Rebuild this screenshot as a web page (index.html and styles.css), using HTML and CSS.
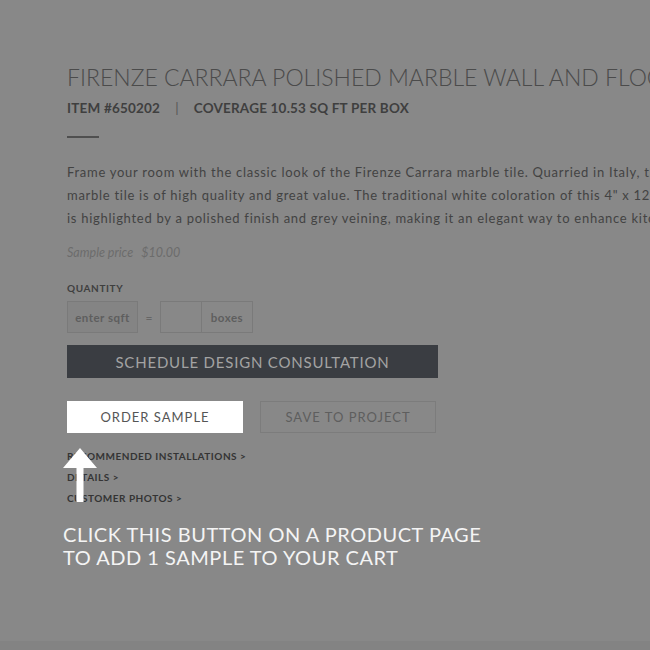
FILE: index.html
```html
<!DOCTYPE html>
<html>
<head>
<meta charset="utf-8">
<link rel="stylesheet" href="styles.css">
</head>
<body>
<div class="page">
  <h1 class="title">FIRENZE CARRARA POLISHED MARBLE WALL AND FLOOR TILE</h1>
  <div class="meta"><span>ITEM #650202</span><span class="sep">|</span><span>COVERAGE 10.53 SQ FT PER BOX</span></div>
  <div class="rule"></div>
  <p class="desc">Frame your room with the classic look of the Firenze Carrara marble tile. Quarried in Italy, this<br>marble tile is of high quality and great value. The traditional white coloration of this 4" x 12" tile<br>is highlighted by a polished finish and grey veining, making it an elegant way to enhance kitchens</p>
  <div class="price"><span>Sample price</span><span>$10.00</span></div>
  <div class="qty-label">QUANTITY</div>
  <div class="qty">
    <div class="field sqft">enter sqft</div>
    <div class="eq">=</div>
    <div class="field num"></div>
    <div class="field boxes">boxes</div>
  </div>
  <div class="schedule">SCHEDULE DESIGN CONSULTATION</div>
  <div class="actions">
    <div class="btn order">ORDER SAMPLE</div>
    <div class="btn save">SAVE TO PROJECT</div>
  </div>
  <div class="links">
    <div class="link">RECOMMENDED INSTALLATIONS &gt;</div>
    <div class="link">DETAILS &gt;</div>
    <div class="link">CUSTOMER PHOTOS &gt;</div>
    <svg class="arrow" width="34" height="54" viewBox="0 0 34 54"><polygon points="17,0 34,20 20.5,20 20.5,54 13.5,54 13.5,20 0,20" fill="#fff"/></svg>
  </div>
  <div class="callout">CLICK THIS BUTTON ON A PRODUCT PAGE<br>TO ADD 1 SAMPLE TO YOUR CART</div>
</div>
<div class="bottom"></div>
</body>
</html>
```
FILE: styles.css
```css
html, body {
  margin: 0;
  padding: 0;
  width: 650px;
  height: 650px;
  overflow: hidden;
  background: #888888;
  font-family: Lato, "Open Sans", sans-serif;
}
.page {
  padding: 63px 0 0 67px;
  height: 578px;
  box-sizing: content-box;
  white-space: nowrap;
  overflow: hidden;
}
.title {
  margin: 0;
  font-size: 23px;
  font-weight: 300;
  color: #4b4b4b;
  line-height: 28px;
  letter-spacing: 0;
}
.meta {
  margin-top: 8px;
  font-size: 13.5px;
  font-weight: 700;
  color: #3f3f3f;
  line-height: 18px;
  letter-spacing: 0.2px;
}
.meta .sep {
  margin: 0 15px 0 15px;
  font-weight: 400;
  color: #555;
}
.rule {
  width: 32px;
  height: 2px;
  background: #4f4f4f;
  margin-top: 19px;
}
.desc {
  margin: 23px 0 0;
  font-size: 13px;
  line-height: 23px;
  color: #434343;
  letter-spacing: 0.72px;
}
.price {
  margin-top: 13px;
  font-size: 12.5px;
  font-style: italic;
  color: #6c6c6c;
  display: flex;
  gap: 8px;
  line-height: 20px;
}
.qty-label {
  margin-top: 18px;
  font-size: 10px;
  font-weight: 700;
  color: #3f3f3f;
  letter-spacing: 0.6px;
  line-height: 14px;
}
.qty {
  display: flex;
  margin-top: 6px;
  height: 32px;
  align-items: stretch;
}
.field {
  border: 1px solid #7a7a7a;
  box-sizing: border-box;
  display: flex;
  align-items: center;
  justify-content: center;
  font-size: 11.5px;
  font-weight: 700;
  color: #5e5e5e;
  letter-spacing: 0.5px;
}
.sqft { width: 71px; background: #848484; }
.eq { width: 22px; display: flex; align-items: center; justify-content: center; color: #666; font-size: 12px; }
.num { width: 41px; border-right: none; }
.boxes { width: 52px; }
.schedule {
  margin-top: 12px;
  width: 371px;
  height: 33px;
  background: #3a3d42;
  color: #a3a3a3;
  font-size: 15px;
  letter-spacing: 0.8px;
  display: flex;
  align-items: center;
  justify-content: center;
}
.actions {
  display: flex;
  gap: 17px;
  margin-top: 23px;
}
.btn {
  width: 176px;
  height: 32px;
  box-sizing: border-box;
  display: flex;
  align-items: center;
  justify-content: center;
  font-size: 13px;
  letter-spacing: 1px;
}
.order { background: #ffffff; color: #555555; }
.save { border: 1px solid #7c7c7c; color: #5e5e5e; }
.links {
  position: relative;
  margin-top: 13px;
}
.link {
  font-size: 10px;
  font-weight: 700;
  color: #343434;
  letter-spacing: 0.5px;
  line-height: 21px;
}
.arrow {
  position: absolute;
  left: -4px;
  top: 2px;
}
.callout {
  margin-top: 14px;
  margin-left: -4px;
  color: #f4f4f4;
  font-size: 20px;
  line-height: 23px;
  letter-spacing: 0.52px;
}
.bottom {
  height: 9px;
  background: #838383;
}
```
